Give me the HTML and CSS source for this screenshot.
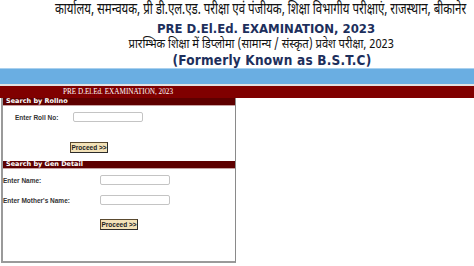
FILE: index.html
```html
<!DOCTYPE html>
<html lang="hi">
<head>
    <meta charset="UTF-8">
    <meta name="viewport" content="width=device-width, initial-scale=1.0">
    <title>PRE D.El.Ed. EXAMINATION, 2023</title>
    <link rel="stylesheet" href="styles.css">
</head>
<body>
    <div class="header">
        <div class="line hi-line"><span class="office">कार्यालय, समन्वयक, प्री डी.एल.एड. परीक्षा एवं पंजीयक, शिक्षा विभागीय परीक्षाएं, राजस्थान, बीकानेर</span></div>
        <div class="line en-line"><span class="exam">PRE D.El.Ed. EXAMINATION, 2023</span></div>
        <div class="line hi-line"><span class="exam-hi">प्रारम्भिक शिक्षा में डिप्लोमा (सामान्य / संस्कृत) प्रवेश परीक्षा, 2023</span></div>
        <div class="line en-line"><span class="exam wide">(Formerly Known as B.S.T.C)</span></div>
    </div>

    <div class="blue-bar"></div>

    <div class="title-bar">
        <div class="title-cell">PRE D.El.Ed. EXAMINATION, 2023</div>
    </div>

    <div class="panel">
        <div class="section-bar">Search by Rollno</div>
        <div class="roll-row">
            <label for="rollInput">Enter Roll No:</label>
            <input type="text" id="rollInput">
        </div>
        <div class="roll-action">
            <button class="proceed">Proceed &gt;&gt;</button>
        </div>

        <div class="section-bar">Search by Gen Detail</div>
        <div class="gen-row first">
            <label for="nameInput">Enter Name:</label>
            <input type="text" id="nameInput">
        </div>
        <div class="gen-row">
            <label for="motherInput">Enter Mother's Name:</label>
            <input type="text" id="motherInput">
        </div>
        <div class="gen-action">
            <button class="proceed">Proceed &gt;&gt;</button>
        </div>
    </div>
</body>
</html>
```

FILE: styles.css
```css
body {
    margin: 0;
    background-color: #ffffff;
    font-family: "Liberation Sans", Arial, sans-serif;
    color: #1a1a1a;
}

.header {
    height: 67px;
    padding-top: 1px;
    overflow: hidden;
}

.line {
    display: flex;
    justify-content: center;
    white-space: nowrap;
}

.hi-line {
    padding-left: 48px;
}

.en-line {
    padding-left: 58px;
}

.office {
    display: inline-block;
    font-family: "Noto Sans Devanagari", "Noto Sans", sans-serif;
    font-size: 16px;
    line-height: 20px;
    color: #111111;
    transform: scaleX(0.72);
}

.exam {
    font-family: "DejaVu Sans", sans-serif;
    font-stretch: condensed;
    font-weight: bold;
    font-size: 13px;
    line-height: 15px;
    color: #1d2f5c;
}

.exam.wide {
    font-size: 13.5px;
    letter-spacing: 0.2px;
    margin-left: 12px;
}

.exam-hi {
    display: inline-block;
    font-family: "Noto Sans Devanagari", "Noto Sans", sans-serif;
    font-size: 13px;
    line-height: 17px;
    color: #111111;
    transform: scaleX(0.86);
}

.blue-bar {
    height: 15px;
    background-color: #6aaee2;
    border-top: 1px solid #a9d0ee;
    border-bottom: 2px solid #e2e2e2;
}

.title-bar {
    height: 12px;
    background-color: #800000;
    display: flex;
}

.title-cell {
    width: 236px;
    text-align: center;
    font-family: "Liberation Serif", "Times New Roman", serif;
    font-size: 7.2px;
    line-height: 12px;
    color: #ffffff;
}

.panel {
    width: 232px;
    margin-left: 1px;
    height: 163px;
    border-left: 2px solid #9a9a9a;
    border-right: 1px solid #8a8a8a;
    border-bottom: 2px solid #9a9a9a;
}

.section-bar {
    height: 7px;
    background-color: #5e0000;
    border-bottom: 1px solid #c9a3a3;
    color: #ffffff;
    font-family: "DejaVu Sans", sans-serif;
    font-size: 6.5px;
    font-weight: bold;
    line-height: 7px;
    padding-left: 3px;
}

label {
    font-size: 6.5px;
    font-weight: bold;
    color: #333333;
}

input {
    box-sizing: border-box;
    height: 10px;
    width: 70px;
    padding: 0;
    margin: 0;
    border: 1px solid #c4c4c4;
    border-radius: 2px;
    background-color: #ffffff;
}

.roll-row {
    display: grid;
    grid-template-columns: 58px 70px;
    align-items: center;
    padding-left: 12px;
    margin-top: 6px;
}

.roll-action {
    display: flex;
    padding-left: 67px;
    margin-top: 20px;
    margin-bottom: 8px;
}

.proceed {
    box-sizing: border-box;
    height: 11px;
    width: 38px;
    padding: 0;
    background-color: #f3e2b8;
    border: 1px solid #5a4a30;
    border-right-color: #2b2b2b;
    border-bottom-color: #2b2b2b;
    font-family: "Liberation Sans", Arial, sans-serif;
    font-size: 6.5px;
    font-weight: bold;
    color: #222222;
    line-height: 9px;
}

.gen-row {
    display: grid;
    grid-template-columns: 97px 70px;
    align-items: center;
    margin-top: 10px;
}

.gen-row.first {
    margin-top: 6px;
}

.gen-action {
    display: flex;
    padding-left: 97px;
    margin-top: 14px;
}
```
